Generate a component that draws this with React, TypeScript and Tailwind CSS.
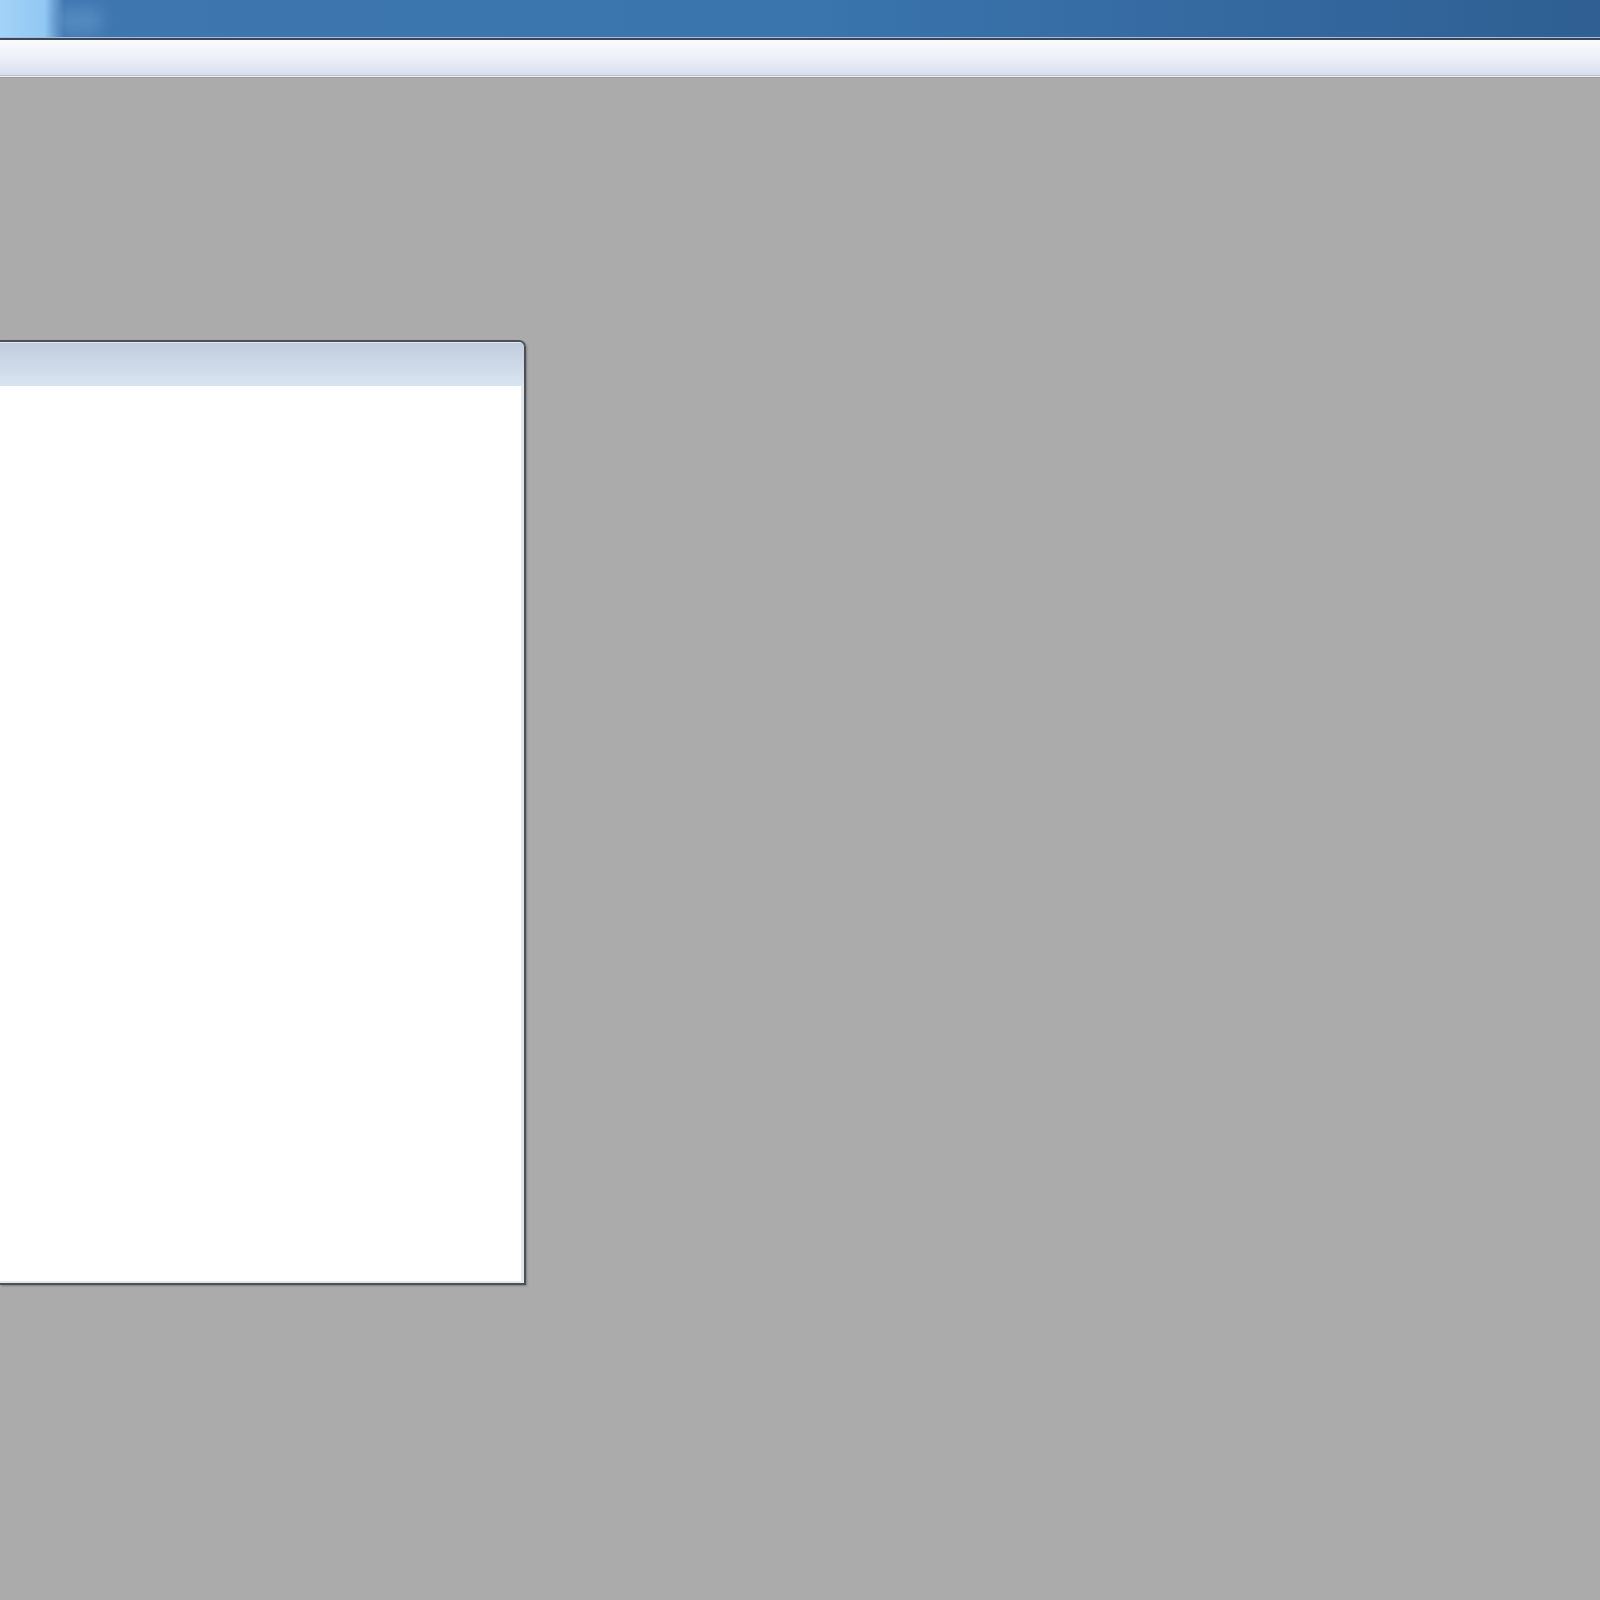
import React from "react";

export default function App() {
  return (
    <div className="w-[1600px] h-[1600px] bg-[#ababab] flex flex-col overflow-hidden font-['Liberation_Sans',sans-serif]">
      {/* Title / tab bar */}
      <div className="relative h-[37px] shrink-0 bg-gradient-to-r from-[#3f77b0] via-[#3a75ae] to-[#2f5f93] overflow-hidden">
        <div className="absolute left-0 top-0 h-[37px] w-[64px] bg-[linear-gradient(to_right,#a3d3f8_0%,#92c8f3_70%,rgba(120,170,220,0)_100%)]" />
        <div className="absolute left-[58px] top-[8px] h-[26px] w-[44px] rounded-[8px] bg-[#6196c9] opacity-60 blur-[7px]" />
      </div>
      <div className="h-[1px] shrink-0 bg-[#a6bcd8]" />
      <div className="h-[2px] shrink-0 bg-[#3b4656]" />
      {/* Toolbar */}
      <div className="h-[35px] shrink-0 bg-gradient-to-b from-[#fbfbfd] via-[#eef0f8] to-[#d9deef]" />
      <div className="h-[1px] shrink-0 bg-[#b9bdc6]" />
      <div className="h-[1px] shrink-0 bg-[#f2f3f6]" />
      <div className="h-[1px] shrink-0 bg-[#9a9a9a]" />

      {/* Window */}
      <div className="mt-[262px] w-[526px] h-[945px] shrink-0 flex flex-col border-t-[2px] border-r-[2px] border-b-[2px] border-[#4b5058] rounded-tr-[7px] overflow-hidden shadow-[1px_1px_2px_rgba(0,0,0,0.25)]">
        <div className="h-[44px] shrink-0 bg-gradient-to-b from-[#c2cedd] to-[#d8e4f1] border-t border-[#e4e9f0]" />
        <div className="flex-1 flex flex-row bg-white">
          <div className="flex-1 flex flex-col">
            <div className="flex-1" />
            <div className="h-[2px] bg-[#e6e7ec]" />
          </div>
          <div className="w-[3px] bg-[#e4e5ea]" />
        </div>
      </div>
    </div>
  );
}
